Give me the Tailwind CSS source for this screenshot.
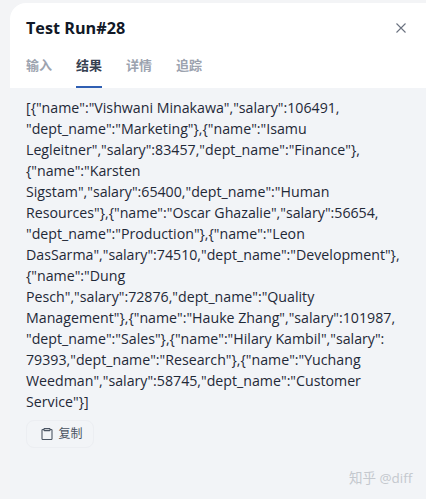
<!DOCTYPE html>
<html lang="zh">
<head>
<meta charset="utf-8">
<script src="https://cdn.jsdelivr.net/npm/@tailwindcss/browser@4"></script>
</head>
<body class="m-0 w-[426px] h-[499px] overflow-hidden bg-[#f3f4f6] font-['Open_Sans','Noto_Sans_CJK_SC',sans-serif]">
<div class="relative ml-[10px] mt-[3px] h-[496px] w-[416px] flex flex-col rounded-tl-[16px] bg-[#f2f4f7] overflow-hidden">
  <div class="bg-white h-[85px] shrink-0 pl-[16px] pr-[20px]">
    <div class="flex items-center justify-between pt-[13px] h-[37px]">
      <h1 class="text-[16.2px] font-bold leading-[24px] text-[#111827] m-0">Test Run#28</h1>
      <svg class="w-[10px] h-[10px]" viewBox="0 0 10 10" fill="none" stroke="#6b7280" stroke-width="1.1"><path d="M.5.5l9 9M9.5.5l-9 9"/></svg>
    </div>
    <div class="flex gap-[24px] mt-[13px] text-[13px] leading-[24px] font-semibold text-[#9ca3af]">
      <span>输入</span>
      <span class="relative h-[35px] text-[#374151]">结果<span class="absolute left-0 right-0 bottom-0 h-[2px] bg-[#2f5fb3]"></span></span>
      <span>详情</span>
      <span>追踪</span>
    </div>
  </div>
  <div class="pl-[16px] pt-[9px] text-[14.2px] leading-[21px] text-[#1f2937] whitespace-nowrap">[{"name":"Vishwani Minakawa","salary":106491,<br>"dept_name":"Marketing"},{"name":"Isamu<br>Legleitner","salary":83457,"dept_name":"Finance"},<br>{"name":"Karsten<br>Sigstam","salary":65400,"dept_name":"Human<br>Resources"},{"name":"Oscar Ghazalie","salary":56654,<br>"dept_name":"Production"},{"name":"Leon<br>DasSarma","salary":74510,"dept_name":"Development"},<br>{"name":"Dung<br>Pesch","salary":72876,"dept_name":"Quality<br>Management"},{"name":"Hauke Zhang","salary":101987,<br>"dept_name":"Sales"},{"name":"Hilary Kambil","salary":<br>79393,"dept_name":"Research"},{"name":"Yuchang<br>Weedman","salary":58745,"dept_name":"Customer<br>Service"}]</div>
  <div class="ml-[16px] mt-[8px] w-[68px] h-[28px] pl-[4px] flex items-center justify-center gap-[5px] rounded-[8px] border border-[#eceef2] text-[12px] text-[#4b5563]">
    <svg class="w-[12px] h-[12px]" viewBox="0 0 12 12" fill="none" stroke="#4b5563" stroke-width="1.1"><path d="M3 1.500H1.800a.8.8 0 0 0-.8.8v8.400a.8.8 0 0 0 .8.8h8.400a.8.8 0 0 0 .8-.8V2.300a.8.8 0 0 0-.8-.8H9"/><rect x="3" y=".6" width="6" height="2" rx=".4"/></svg>
    <span>复制</span>
  </div>
  <div class="absolute left-[339px] top-[466px] text-[13.5px] leading-[18px] text-[#c4c8ce] whitespace-nowrap">知乎 @diff</div>
</div>
</body>
</html>
